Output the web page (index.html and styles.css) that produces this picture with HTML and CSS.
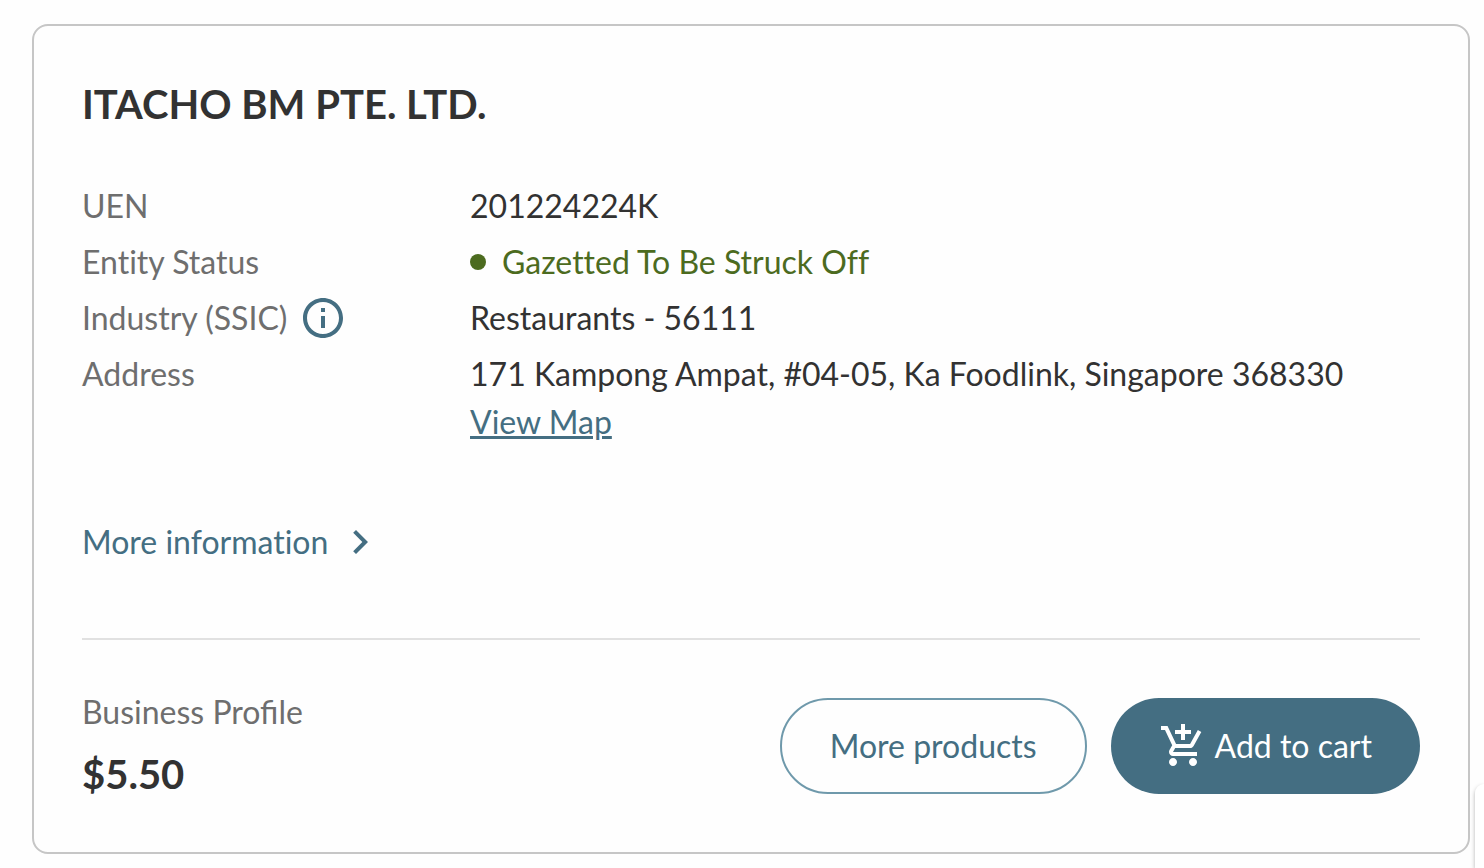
FILE: index.html
```html
<!DOCTYPE html>
<html lang="en">
<head>
  <meta charset="UTF-8">
  <meta name="viewport" content="width=device-width, initial-scale=1">
  <title>ITACHO BM PTE. LTD.</title>
  <link rel="stylesheet" href="styles.css">
</head>
<body>

<main class="card">
  <h1>ITACHO BM PTE. LTD.</h1>

  <dl class="details">
    <dt>UEN</dt>
    <dd>201224224K</dd>

    <dt>Entity Status</dt>
    <dd class="status"><span class="dot"></span>Gazetted To Be Struck Off</dd>

    <dt>
      Industry (SSIC)
      <button class="info-btn" type="button" aria-label="About SSIC">
        <svg class="icon" viewBox="0 0 24 24"><path d="M11 7h2v2h-2zm0 4h2v6h-2zm1-9C6.48 2 2 6.48 2 12s4.480 10 10 10 10-4.480 10-10S17.520 2 12 2zm0 18c-4.410 0-8-3.590-8-8s3.590-8 8-8 8 3.590 8 8-3.590 8-8 8z"/></svg>
      </button>
    </dt>
    <dd>Restaurants - 56111</dd>

    <dt>Address</dt>
    <dd>
      171 Kampong Ampat, #04-05, Ka Foodlink, Singapore 368330
      <div><a href="#map">View Map</a></div>
    </dd>
  </dl>

  <a class="more-info" href="#more">
    More information
    <svg class="icon" viewBox="0 0 24 24"><path d="M10 6L8.590 7.410 13.170 12l-4.580 4.590L10 18l6-6z"/></svg>
  </a>

  <div class="footer">
    <div>
      <div class="product">Business Profile</div>
      <div class="price">$5.50</div>
    </div>
    <div class="actions">
      <button class="btn btn-outline" type="button">More products</button>
      <button class="btn btn-primary" type="button">
        <svg class="icon" viewBox="0 0 24 24"><path d="M11 9h2V6h3V4h-3V1h-2v3H8v2h3v3zm-4 9c-1.100 0-1.990.9-1.990 2S5.900 22 7 22s2-.9 2-2-.9-2-2-2zm10 0c-1.100 0-1.990.9-1.990 2s.89 2 1.990 2 2-.9 2-2-.9-2-2-2zm-8.900-5h7.450c.75 0 1.410-.41 1.750-1.030L21.160 4.960 19.420 4l-3.870 7H8.530L4.270 2H1v2h2l3.600 7.590-1.350 2.440C4.520 15.370 5.480 17 7 17h12v-2H7l1.100-2z"/></svg>
        Add to cart
      </button>
    </div>
  </div>
</main>

<div class="side-widget"></div>

</body>
</html>
```

FILE: styles.css
```css
* {
  box-sizing: border-box;
}
body {
  margin: 0;
  padding: 24px 14px 14px 32px;
  font-family: Lato, sans-serif;
  font-size: 32px;
  line-height: 48px;
  font-variant-ligatures: no-common-ligatures;
  color: #323232;
  background: #fefefe;
}
.card {
  padding: 48px;
  border: 2px solid #c6c6c6;
  border-radius: 16px;
}
h1 {
  margin: 0 0 48px;
  font-size: 40px;
  line-height: 60px;
  font-weight: bold;
}
.icon {
  display: block;
  width: 48px;
  height: 48px;
  fill: currentColor;
  flex-shrink: 0;
}
a {
  color: #446e82;
  text-decoration-thickness: 3px;
  text-underline-offset: 2px;
}

/* company details */
.details {
  display: grid;
  grid-template-columns: 29% 1fr;
  row-gap: 8px;
  margin: 0 0 72px;
}
.details dt {
  display: flex;
  gap: 12px;
  color: #6e6e6e;
}
.details dd {
  margin: 0;
}
.info-btn {
  padding: 0;
  border: none;
  background: none;
  color: #446e82;
  cursor: pointer;
}
.details .status {
  display: flex;
  align-items: center;
  gap: 16px;
  color: #4c6b1f;
}
.dot {
  width: 16px;
  height: 16px;
  border-radius: 50%;
  background: #4c6b1f;
}
.more-info {
  display: flex;
  gap: 8px;
  width: fit-content;
  text-decoration: none;
}

/* price and buttons */
.footer {
  display: flex;
  flex-wrap: wrap;
  justify-content: space-between;
  align-items: center;
  gap: 24px;
  margin-top: 72px;
  padding-top: 48px;
  border-top: 2px solid #e1e1e1;
}
.product {
  color: #6e6e6e;
  font-variant-ligatures: normal;
}
.price {
  margin-top: 8px;
  font-size: 40px;
  line-height: 60px;
  font-weight: bold;
}
.actions {
  display: flex;
  gap: 24px;
}
.btn {
  display: flex;
  align-items: center;
  gap: 8px;
  height: 96px;
  padding: 0 48px;
  border: none;
  border-radius: 48px;
  font: inherit;
  cursor: pointer;
}
.btn-outline {
  border: 2px solid #6f99ab;
  background: none;
  color: #446e82;
}
.btn-primary {
  background: #446e82;
  color: #fff;
}

/* tab peeking in from the right edge */
.side-widget {
  position: fixed;
  right: 0;
  bottom: 0;
  width: 9px;
  height: 84px;
  border-radius: 10px 0 0 0;
  background: #fff;
  box-shadow: 0 2px 4px rgba(0,0,0,0.3);
}
```
